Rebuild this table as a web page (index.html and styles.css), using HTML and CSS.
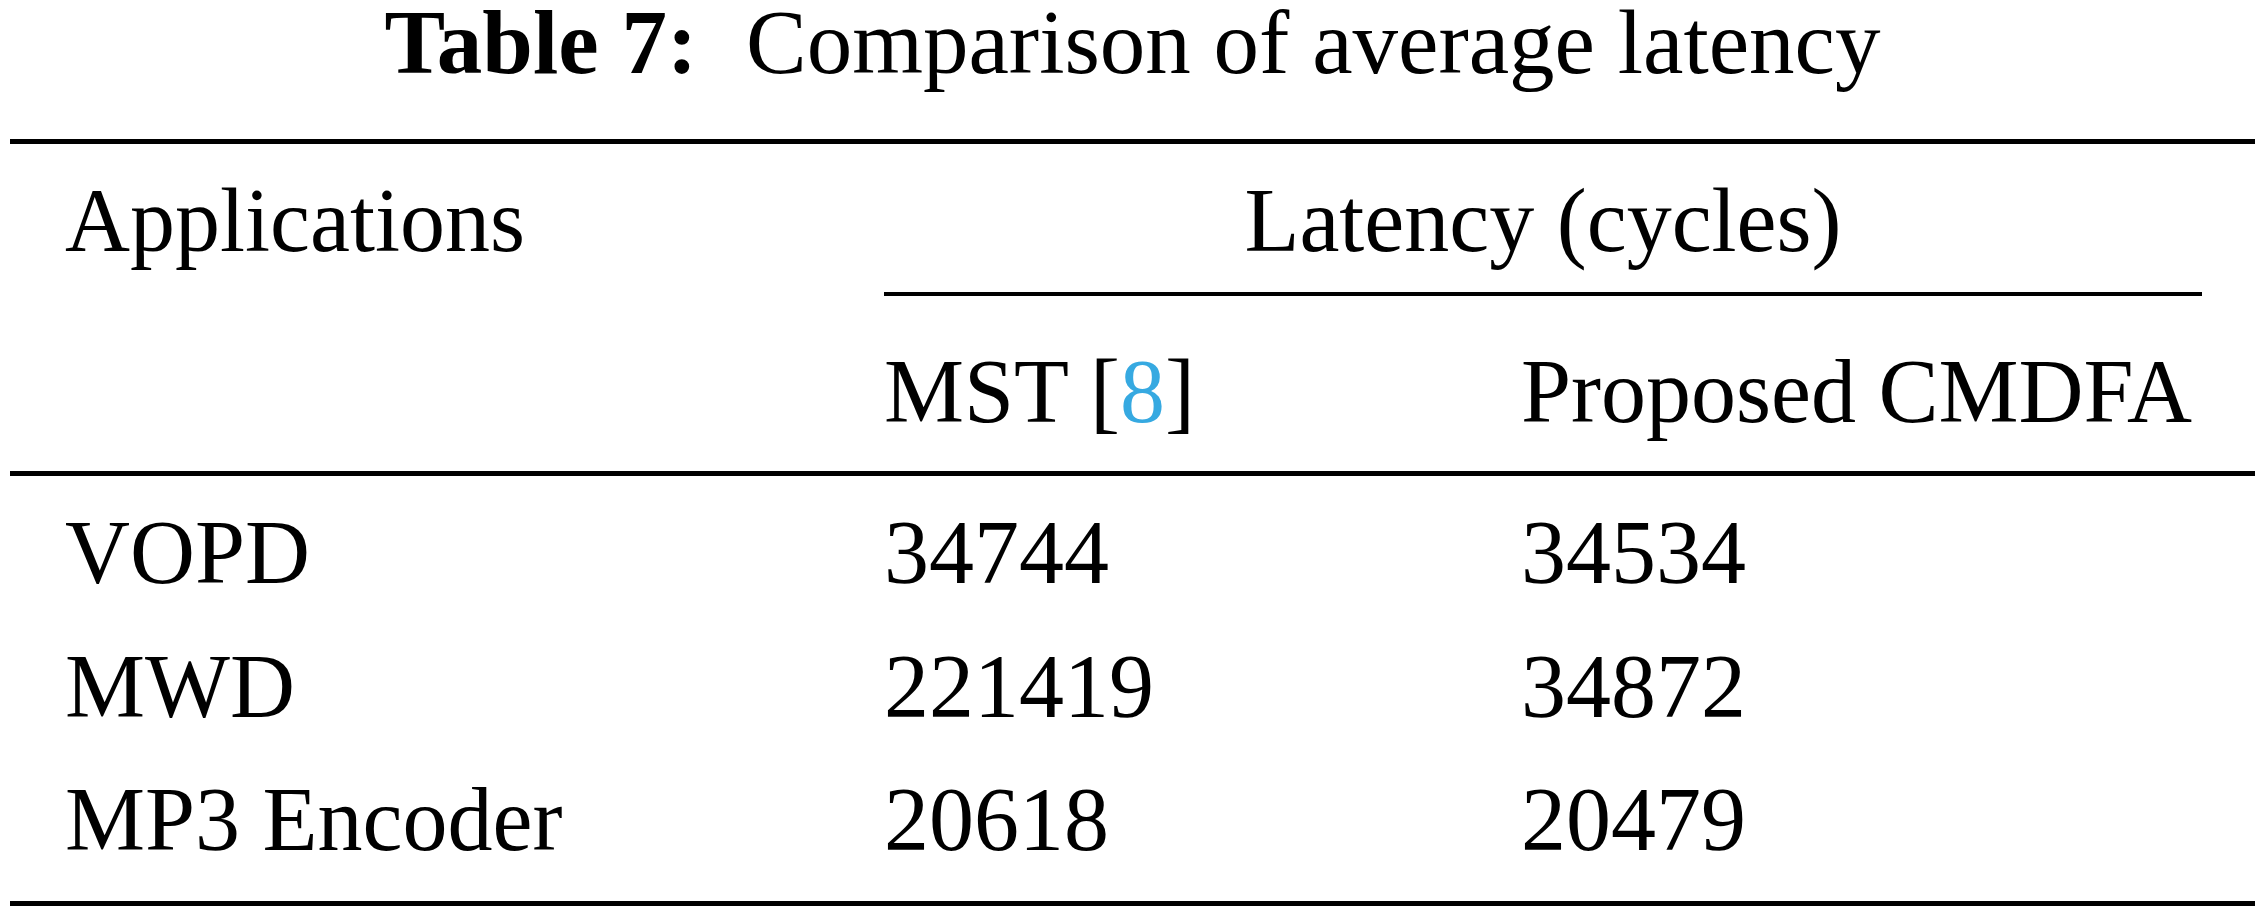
FILE: index.html
```
<!DOCTYPE html>
<html lang="en">
<head>
    <meta charset="UTF-8">
    <meta name="viewport" content="width=device-width, initial-scale=1.0">
    <title>Table 7</title>
    <link rel="stylesheet" href="styles.css">
</head>
<body>

    <div class="table-wrap">
        <p class="caption"><b class="caption-label">Table 7:</b> Comparison of average latency</p>

        <table class="results">
            <colgroup>
                <col class="col-app">
                <col class="col-mst">
                <col class="col-prop">
            </colgroup>
            <thead>
                <tr class="head-top">
                    <th>Applications</th>
                    <th colspan="2" class="group">
                        <div class="group-title">Latency (cycles)</div>
                    </th>
                </tr>
                <tr class="head-sub">
                    <th></th>
                    <th>MST [<a class="cite" href="#ref8">8</a>]</th>
                    <th>Proposed CMDFA</th>
                </tr>
            </thead>
            <tbody>
                <tr>
                    <td>VOPD</td>
                    <td>34744</td>
                    <td>34534</td>
                </tr>
                <tr>
                    <td>MWD</td>
                    <td>221419</td>
                    <td>34872</td>
                </tr>
                <tr>
                    <td>MP3 Encoder</td>
                    <td>20618</td>
                    <td>20479</td>
                </tr>
            </tbody>
        </table>
    </div>

</body>
</html>
```

FILE: styles.css
```
/* page */
body {
    margin: 0;
    padding: 0 10px;
    background: #ffffff;
    color: #000000;
    font-family: "Liberation Serif", "Times New Roman", serif;
    font-size: 90px;
}

/* caption */
.caption {
    margin: 0 0 53px;
    font-size: 91px;
    line-height: 86px;
    text-align: center;
}

.caption-label {
    margin-right: 26px;
}

/* table */
.results {
    width: 100%;
    table-layout: fixed;
    border-collapse: separate;
    border-spacing: 0;
    border-top: 5px solid #000000;
    border-bottom: 5px solid #000000;
}

.col-app {
    width: 820px;
}

.col-mst {
    width: 638px;
}

.results th,
.results td {
    padding: 0 53px 0 54px;
    font-weight: normal;
    text-align: left;
    line-height: 100px;
    white-space: nowrap;
}

.results th:first-child,
.results td:first-child {
    padding-left: 55px;
}

.results td:last-child,
.results th:last-child {
    padding-left: 53px;
}

/* header */
.head-top th {
    padding-top: 27px;
    vertical-align: top;
}

.results th.group {
    padding-left: 54px;
}

.group-title {
    padding-bottom: 21px;
    border-bottom: 4px solid #000000;
    text-align: center;
}

.head-sub th {
    padding-top: 46px;
    padding-bottom: 29px;
    border-bottom: 5px solid #000000;
}

.cite {
    color: #36a9e1;
    text-decoration: none;
}

/* body rows */
.results tbody td {
    padding-top: 17px;
    padding-bottom: 16.5px;
}

.results tbody tr:first-child td {
    padding-top: 27px;
}

.results tbody tr:last-child td {
    padding-bottom: 31px;
}
```
